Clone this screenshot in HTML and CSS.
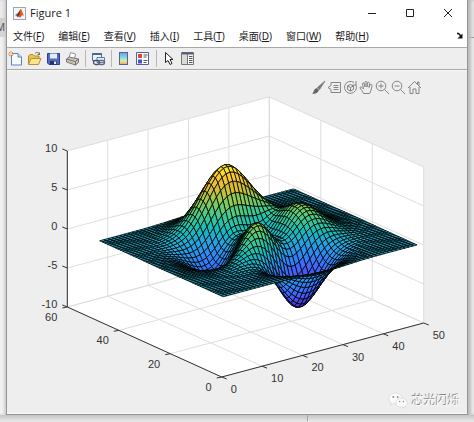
FILE: index.html
```html
<!DOCTYPE html>
<html lang="zh-CN">

<head>
    <meta charset="UTF-8">
    <meta name="viewport" content="width=device-width, initial-scale=1.0">
    <title>Figure 1</title>
    <link rel="stylesheet" href="styles.css">
</head>

<body>
    <div class="desktop">
        <div class="behind behind-left"><span>M</span></div>
        <main class="window">
            <header class="titlebar">
                <svg class="app-icon" viewBox="0 0 13 13">
                    <rect x=".5" y=".5" width="12" height="12" fill="#f4f6f8" stroke="#9aa7b5"/>
                    <path d="M2 8l3-2 2 2-2 2z" fill="#3c7fb0"/>
                    <path d="M5 6c1-1 2-4 3-4L7 8l-2 2-1-1z" fill="#8c2a1c"/>
                    <path d="M8 2c1 1 2 5 3 7-1-1-2-1-3 1-1 1-2 0-3 0 2-1 2-6 3-8z" fill="#e2601f"/>
                </svg>
                <h1>Figure 1</h1>
                <div class="window-controls">
                    <button aria-label="最小化"><svg viewBox="0 0 10 10"><path d="M1 5.5h8"/></svg></button>
                    <button aria-label="最大化"><svg viewBox="0 0 10 10"><path d="M1.500 1.500h7v7h-7z"/></svg></button>
                    <button aria-label="关闭"><svg viewBox="0 0 10 10"><path d="M1 1l8 8M9 1L1 9"/></svg></button>
                </div>
            </header>

            <nav class="menubar">
                <button>文件(<u>F</u>)</button>
                <button>编辑(<u>E</u>)</button>
                <button>查看(<u>V</u>)</button>
                <button>插入(<u>I</u>)</button>
                <button>工具(<u>T</u>)</button>
                <button>桌面(<u>D</u>)</button>
                <button>窗口(<u>W</u>)</button>
                <button>帮助(<u>H</u>)</button>
                <button class="dock" aria-label="停靠">
                    <svg viewBox="0 0 7 7"><path d="M1 1.500h1.500L5 4" fill="none" stroke="#111" stroke-width="1.500"/><path d="M6.500 1.500v5h-5z" fill="#111"/></svg>
                </button>
            </nav>

            <div class="toolbar">
                <button aria-label="新建图窗">
                    <svg viewBox="0 0 15 15">
                        <path d="M3.500 2.500h6.500l3.500 3.500v8H3.500z" fill="#f5faff" stroke="#6083a8"/>
                        <path d="M10 2.500V6h3.500" fill="#cfe0f0" stroke="#6083a8"/>
                        <path d="M3 0v6M0 3h6M1 1l4 4M5 1L1 5" stroke="#e58a4c" stroke-width=".9"/>
                        <circle cx="3" cy="3" r="1" fill="#fff3c8"/>
                    </svg>
                </button>
                <button aria-label="打开文件">
                    <svg viewBox="0 0 15 15">
                        <path d="M1.500 13V5l1.500-1.500h3L7.500 5H12v3" fill="#e8c552" stroke="#b18a2b"/>
                        <path d="M1.500 13.500L4 7.500h10l-2.500 6z" fill="#fbe58c" stroke="#b5912f"/>
                        <path d="M8 2.500c2-2 4-1 4.500 1M12.500 1.500v2h-2" fill="none" stroke="#6e6b59"/>
                    </svg>
                </button>
                <button aria-label="保存图窗">
                    <svg viewBox="0 0 15 15">
                        <path d="M1.500 2.500h12v11H3l-1.500-1.500z" fill="#5269c2" stroke="#2f3d8d"/>
                        <path d="M4 2.500h7v5H4z" fill="#e3edfb"/>
                        <path d="M4 10h6.500v3.500H4z" fill="#2b3266"/>
                        <path d="M8 10.500h2v2.500H8z" fill="#e9ecf8"/>
                    </svg>
                </button>
                <button aria-label="打印图窗">
                    <svg viewBox="0 0 15 15">
                        <path d="M4 7l1.500-5.500 5 1.500L9.500 8" fill="#fff" stroke="#929292"/>
                        <path d="M1.500 8L4 6l9.500 2v3.500l-3 2.500-9-3z" fill="#c8c8c8" stroke="#747474"/>
                        <path d="M1.500 8l9 2.500 3-2.500M10.500 10.500V14" fill="none" stroke="#6d6d6d"/>
                        <path d="M3 10.500l5 1.500" stroke="#d7b748"/>
                    </svg>
                </button>
                <span class="separator"></span>
                <button aria-label="链接绘图">
                    <svg viewBox="0 0 15 15" fill="none">
                        <path d="M1.500 2.500h9v7h-9z" fill="#edf3fb" stroke="#516b96"/>
                        <path d="M1.500 3h9" stroke="#4b6695" stroke-width="2"/>
                        <path d="M6 6.500h7.500v5H6z" fill="#e4edf7" stroke="#647ba0"/>
                        <rect x="2.500" y="9.500" width="6" height="4" rx="2" stroke="#42536f" stroke-width="1.300"/>
                        <rect x="7.500" y="9.500" width="6" height="4" rx="2" stroke="#596b86" stroke-width="1.300"/>
                    </svg>
                </button>
                <span class="separator"></span>
                <button aria-label="插入颜色栏">
                    <svg viewBox="0 0 15 15">
                        <defs>
                            <linearGradient id="bar" x2="0" y2="1">
                                <stop offset="0" stop-color="#8391df"/>
                                <stop offset=".4" stop-color="#75dce9"/>
                                <stop offset=".7" stop-color="#e6e99a"/>
                                <stop offset="1" stop-color="#ee9d76"/>
                            </linearGradient>
                        </defs>
                        <rect x="2.500" y="1.500" width="8" height="12" fill="url(#bar)" stroke="#4f6593"/>
                    </svg>
                </button>
                <button aria-label="插入图例">
                    <svg viewBox="0 0 15 15">
                        <path d="M.5 1.500h12v12H.5z" fill="#fff" stroke="#4f6490"/>
                        <path d="M2 3h4v4H2z" fill="#db4549"/>
                        <path d="M2 8.500h4v4H2z" fill="#4953cb"/>
                        <path d="M7.500 4h4M7.500 6h3M7.500 9.500h4M7.500 11.500h3" stroke="#555"/>
                    </svg>
                </button>
                <span class="separator"></span>
                <button aria-label="编辑绘图">
                    <svg viewBox="0 0 15 15">
                        <path d="M3.500 1.500v10L6 9.500l2 4 2-1-2-4h3z" fill="#fff" stroke="#222"/>
                    </svg>
                </button>
                <button aria-label="打开属性检查器">
                    <svg viewBox="0 0 15 15">
                        <path d="M.5 1.500h12v12H.5z" fill="#f6f6f6" stroke="#777"/>
                        <path d="M1 2.500h11" stroke="#4e5d75" stroke-width="2"/>
                        <path d="M6.500 3v10" stroke="#777"/>
                        <path d="M1 4h5v9H1z" fill="#dadada"/>
                        <path d="M8 5.500h3.500M8 7.500h3.500M8 9.500h3.500M8 11.500h3.500" stroke="#555"/>
                    </svg>
                </button>
            </div>

            <section class="figure">
                <svg class="plot" viewBox="0 0 460 342" role="img" aria-label="peaks">
                    <g class="box"></g>
                    <g class="grid"></g>
                    <g class="surface"></g>
                    <g class="axis"></g>
                    <g class="labels"></g>
                </svg>

                <div class="axes-toolbar">
                    <button aria-label="刷亮">
                        <svg viewBox="0 0 15 15"><path d="M14 1L6.500 7.500l2 2z" fill="#777"/><path d="M6 8l2 2c-1 3-4 4-7 4 2-1 1-5 5-6z" fill="#666" stroke="none"/></svg>
                    </button>
                    <button aria-label="数据提示">
                        <svg viewBox="0 0 15 15"><path d="M4 2.500h9.500v10H4v-3L1 7.500l3-2zM6.500 5.500h5M6.500 7.500h5M6.500 9.500h5"/></svg>
                    </button>
                    <button aria-label="三维旋转">
                        <svg viewBox="0 0 15 15"><path d="M11 2.500a6 6 0 1 0 2 2.500M13 1v4H9.500M7.500 4.500l3 1.500v3.500l-3 1.500-3-1.500V6zM4.500 6l3 1.500 3-1.500M7.500 7.500V11"/></svg>
                    </button>
                    <button aria-label="平移">
                        <svg viewBox="0 0 15 15"><path d="M4.500 13.500C3.500 11 2 9.500 1 8c-.5-1 1-1.500 2-.5L4.500 9 3.500 4c0-1.500 1.500-1.500 2 0l.5 3V2.500c0-1.500 2-1.500 2 0V7l.5-4c.3-1.300 2-1 2 .5L10 7.500l1-2.500c.5-1.200 2-.8 2 .5-.5 3-1 6-2.500 8z"/></svg>
                    </button>
                    <button aria-label="放大">
                        <svg viewBox="0 0 15 15"><circle cx="6" cy="6" r="4.800"/><path d="M9.500 9.500L14 14M3.500 6h5M6 3.500v5"/></svg>
                    </button>
                    <button aria-label="缩小">
                        <svg viewBox="0 0 15 15"><circle cx="6" cy="6" r="4.800"/><path d="M9.500 9.500L14 14M3.500 6h5"/></svg>
                    </button>
                    <button aria-label="还原视图">
                        <svg viewBox="0 0 15 15"><path d="M1 8l6.500-6.500L14 8M3 7v6.500h3V9h3v4.500h3V7M10.500 4V2h1.500v3.500"/></svg>
                    </button>
                </div>

                <div class="watermark">
                    <svg viewBox="0 0 20 17">
                        <path d="M7.500 1C3.500 1 .8 3.500.8 6.500c0 1.800 1 3.200 2.400 4.200L2.500 13l2.700-1.500c5 1.500 9-1 9-5C14.200 3.500 11.500 1 7.500 1z"/>
                        <path d="M13.500 6c-3.300 0-5.700 2-5.700 4.700s2.400 4.600 5.700 4.600l1.500-.2 2.500 1.200-.6-2c1.400-.8 2.300-2 2.300-3.600C19.200 8 16.800 6 13.500 6z"/>
                        <g class="eyes"><circle cx="5.300" cy="5" r=".9"/><circle cx="9.700" cy="5" r=".9"/><circle cx="11.700" cy="9.500" r=".7"/><circle cx="15.400" cy="9.500" r=".7"/></g>
                    </svg>
                    <span>芯光闪烁</span>
                </div>
            </section>
        </main>
        <div class="behind behind-right"></div>
        <div class="behind behind-bottom"></div>
    </div>
    <script src="plot.js"></script>
</body>

</html>
```
FILE: styles.css
```css
* {
    box-sizing: border-box;
}

body {
    margin: 0;
    background: #e6e6e6;
    font-family: "Noto Sans", "Noto Sans CJK SC", sans-serif;
    color: #1a1a1a;
}

button {
    margin: 0;
    padding: 0;
    border: none;
    background: none;
    font: inherit;
    color: inherit;
}

svg {
    display: block;
}

.desktop {
    display: grid;
    grid-template-columns: 6px minmax(0, 1fr) 6px;
    grid-template-rows: auto 6px;
}

/* Strips of the windows underneath */

.behind {
    overflow: hidden;
}

.behind-left {
    padding-top: 18px;
    background: linear-gradient(#ececec 18px, #cfcfcf 18px, #d8d8d8 37px, #f3f3f3 37px);
    box-shadow: inset -2px 0 3px #ccc;
    font-size: 10px;
    line-height: 18px;
    color: #555;
}

.behind-left span {
    display: block;
    margin-left: -4px;
}

.behind-right {
    background: linear-gradient(#e3e3e3 37px, #9b9b9b 37px, #9b9b9b 38px, #ebebeb 38px);
    box-shadow: inset 3px 0 3px #bbb;
}

.behind-bottom {
    grid-column: 1 / -1;
    background: linear-gradient(90deg, transparent 307px, #a5a5a5 307px, #a5a5a5 308px, transparent 308px), linear-gradient(#c4c4c4, #e6e6e6);
}

/* Window frame */

.window {
    border: 1px solid #949494;
    border-top: none;
    background: #fff;
}

.titlebar {
    display: flex;
    align-items: center;
    height: 26px;
    padding-left: 6px;
}

.app-icon {
    width: 13px;
    height: 13px;
}

.titlebar h1 {
    margin: 0 auto 0 4px;
    font-family: "Open Sans", sans-serif;
    font-size: 11px;
    font-weight: normal;
    line-height: 16px;
}

.window-controls {
    display: flex;
    gap: 28px;
    padding-right: 14px;
}

.window-controls svg {
    width: 10px;
    height: 10px;
    fill: none;
    stroke: #222;
}

.menubar {
    display: flex;
    align-items: center;
    gap: 14px;
    height: 21px;
    padding: 0 4px 2px 6px;
    font-size: 10px;
    line-height: 16px;
    white-space: nowrap;
}

.menubar u {
    text-underline-offset: 1px;
}

.dock {
    margin-left: auto;
}

.dock svg {
    width: 7px;
    height: 7px;
}

.toolbar {
    display: flex;
    align-items: center;
    gap: 4px;
    height: 23px;
    padding: 0 1px;
    border-top: 1px solid #a9a9a9;
    border-bottom: 1px solid #a9a9a9;
    background: #eee;
}

.toolbar svg,
.axes-toolbar svg {
    width: 15px;
    height: 15px;
}

.separator {
    width: 1px;
    height: 17px;
    margin: 0 1px;
    background: #b8b8b8;
}

/* Figure */

.figure {
    position: relative;
    background: #eee;
    border-top: 1px solid #f8f8f8;
    border-bottom: 1px solid #f8f8f8;
}

.plot {
    width: 100%;
    height: auto;
}

.box polygon {
    fill: #fff;
}

.grid line {
    stroke: #dedede;
}

.grid .edge {
    stroke: #c6c6c6;
}

.surface polygon {
    stroke: #000;
    stroke-width: .8;
    stroke-linejoin: round;
}

.axis line {
    stroke: #333;
}

.labels text {
    font-family: "Liberation Sans", Arial, sans-serif;
    font-size: 11px;
    fill: #333;
}

.labels .end {
    text-anchor: end;
}

.axes-toolbar {
    position: absolute;
    top: 9px;
    right: 45px;
    display: flex;
    gap: 1px;
}

.axes-toolbar svg {
    fill: none;
    stroke: #858585;
}

.watermark {
    position: absolute;
    right: 7px;
    bottom: 4px;
    display: flex;
    align-items: center;
    gap: 4px;
    font-family: "Noto Sans CJK SC", sans-serif;
    font-size: 12px;
    line-height: 18px;
    color: #fafafa;
    text-shadow: -1px -1px 0 #888;
}

.watermark svg {
    width: 20px;
    height: 17px;
    fill: #fafafa;
    stroke: #c9c9c9;
    stroke-width: .5;
}

.watermark .eyes {
    fill: #888;
    stroke: none;
}
```
FILE: plot.js
```js
// surf(peaks) drawn as SVG
var SVG_NS = 'http://www.w3.org/2000/svg';
var N = 49;

// Stops of the parula colormap
var parula = [
    [62, 38, 168], [71, 61, 226], [70, 94, 251], [47, 128, 249], [37, 161, 229], [18, 190, 185],
    [72, 203, 134], [147, 201, 81], [222, 187, 50], [254, 202, 50], [249, 251, 21]
];

function project(x, y, z) {
    return [
        214.7 + 4.04 * x - 2.573 * y,
        228 - 1.08 * x - 1.167 * y - 7.8 * z
    ];
}

function add(group, name, attrs, text) {
    var node = document.createElementNS(SVG_NS, name);
    for (var key in attrs) {
        node.setAttribute(key, attrs[key]);
    }
    if (text !== undefined) {
        node.textContent = text;
    }
    document.querySelector('.' + group).appendChild(node);
}

function addLine(group, a, b, className) {
    add(group, 'line', { x1: a[0], y1: a[1], x2: b[0], y2: b[1], 'class': className || '' });
}

function addPolygon(group, points, fill) {
    var attrs = { points: points.map(function (p) { return p[0].toFixed(2) + ',' + p[1].toFixed(2); }).join(' ') };
    if (fill) {
        attrs.fill = fill;
    }
    add(group, 'polygon', attrs);
}

function peaks(x, y) {
    return 3 * Math.pow(1 - x, 2) * Math.exp(-x * x - Math.pow(y + 1, 2))
        - 10 * (x / 5 - Math.pow(x, 3) - Math.pow(y, 5)) * Math.exp(-x * x - y * y)
        - Math.exp(-Math.pow(x + 1, 2) - y * y) / 3;
}

function height(i, j) {
    return peaks(-3 + 6 * (i - 1) / (N - 1), -3 + 6 * (j - 1) / (N - 1));
}

function color(z) {
    var t = Math.max(0, Math.min(1, (z + 6.55) / 14.63)) * 10;
    var k = Math.min(9, Math.floor(t));
    var rgb = parula[k].map(function (c, n) {
        return Math.round(c + (parula[k + 1][n] - c) * (t - k));
    });
    return 'rgb(' + rgb.join(',') + ')';
}

// Walls and floor
addPolygon('box', [
    project(0, 0, -10), project(50, 0, -10), project(50, 0, 10),
    project(50, 60, 10), project(0, 60, 10), project(0, 60, -10)
], '#fff');

// Grid lines
for (var x = 0; x <= 50; x += 10) {
    addLine('grid', project(x, 60, -10), project(x, 60, 10), x === 50 ? 'edge' : '');
    addLine('grid', project(x, 0, -10), project(x, 60, -10));
}
for (var y = 0; y <= 60; y += 20) {
    addLine('grid', project(50, y, -10), project(50, y, 10));
    addLine('grid', project(0, y, -10), project(50, y, -10));
}
for (var z = -10; z <= 10; z += 5) {
    addLine('grid', project(0, 60, z), project(50, 60, z));
    addLine('grid', project(50, 0, z), project(50, 60, z));
}

// Surface, far cells first
for (var j = N - 1; j >= 1; j--) {
    for (var i = N - 1; i >= 1; i--) {
        addPolygon('surface', [
            project(i, j, height(i, j)),
            project(i + 1, j, height(i + 1, j)),
            project(i + 1, j + 1, height(i + 1, j + 1)),
            project(i, j + 1, height(i, j + 1))
        ], color(height(i, j)));
    }
}

// Axis lines with ticks
addLine('axis', project(0, 0, -10), project(50, 0, -10));
addLine('axis', project(0, 0, -10), project(0, 60, -10));
addLine('axis', project(0, 60, -10), project(0, 60, 10));

function addLabel(p, dx, dy, value, className) {
    add('labels', 'text', { x: p[0] + dx, y: p[1] + dy, 'class': className || '' }, value);
}

for (x = 0; x <= 50; x += 10) {
    var px = project(x, 0, -10);
    addLine('axis', px, [px[0] + 5, px[1] + 2]);
    addLabel(px, 9, 16, x);
}
for (y = 0; y <= 60; y += 20) {
    var py = project(0, y, -10);
    addLine('axis', py, [py[0] - 5, py[1] + 1]);
    addLabel(py, -10, 14, y, 'end');
}
for (z = -10; z <= 10; z += 5) {
    var pz = project(0, 60, z);
    addLine('axis', pz, [pz[0] - 5, pz[1] - 2]);
    addLabel(pz, -10, 1, z, 'end');
}
```
